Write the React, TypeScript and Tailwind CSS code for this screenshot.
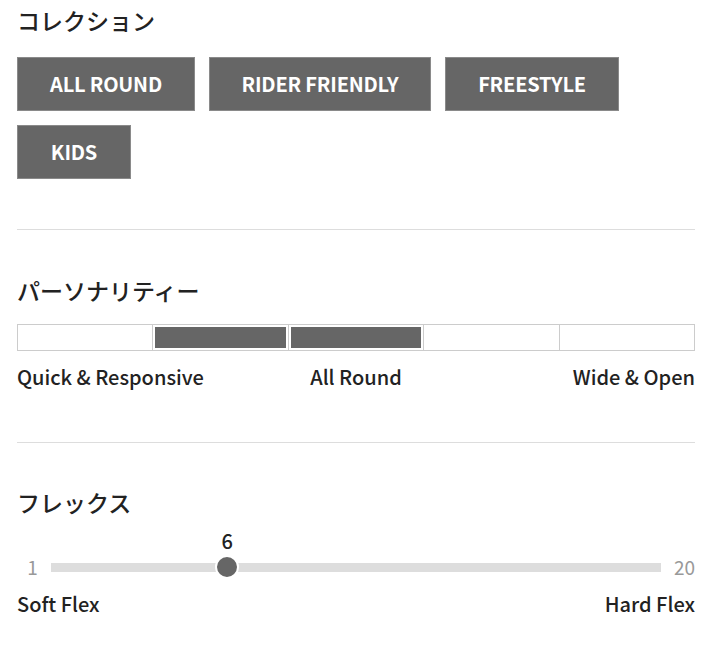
import React from "react";

const font = { fontFamily: '"Noto Sans CJK JP", "Noto Sans", sans-serif' };

function Tag({ label }: { label: string }) {
  return (
    <div className="h-[54px] bg-[#666666] border border-[#8a8a8a] flex items-center justify-center text-white font-bold text-[20px] leading-[28px] tracking-[-0.2px] pb-[1px]">
      {label}
    </div>
  );
}

export default function App() {
  const segs = [false, true, true, false, false];
  const min = 1;
  const max = 20;
  const val = 6;
  const pct = 28.9;
  return (
    <div className="w-[710px] h-[650px] bg-white pl-[17px] pr-[15px] pt-[4px] text-[#222]" style={font}>
      <h2 className="text-[23px] leading-[32px] font-medium text-[#222]">コレクション</h2>
      <div className="mt-[21px] flex flex-wrap gap-[14px]">
        <div className="w-[178px]"><Tag label="ALL ROUND" /></div>
        <div className="w-[222px]"><Tag label="RIDER FRIENDLY" /></div>
        <div className="w-[174px]"><Tag label="FREESTYLE" /></div>
        <div className="w-[114px]"><Tag label="KIDS" /></div>
      </div>
      <div className="mt-[50px] h-px bg-[#dddddd]" />

      <h2 className="mt-[44px] text-[23px] leading-[32px] font-medium text-[#222]">パーソナリティー</h2>
      <div className="mt-[18px] h-[27px] flex border border-[#cccccc]">
        {segs.map((f, i) => (
          <div key={i} className={`flex-1 p-[2px] ${i > 0 ? "border-l border-[#cccccc]" : ""}`}>
            {f && <div className="w-full h-full bg-[#666666]" />}
          </div>
        ))}
      </div>
      <div className="mt-[12px] flex justify-between text-[20px] leading-[28px] font-medium text-[#222]">
        <span className="w-[230px]">Quick &amp; Responsive</span>
        <span>All Round</span>
        <span className="w-[230px] text-right">Wide &amp; Open</span>
      </div>
      <div className="mt-[51px] h-px bg-[#dddddd]" />

      <h2 className="mt-[43px] text-[23px] leading-[32px] font-medium text-[#222]">フレックス</h2>
      <div className="mt-[7px] flex items-center">
        <span className="w-[34px] text-[19px] leading-[28px] text-[#999] text-center">&nbsp;</span>
        <div className="flex-1 relative h-[28px] mr-[34px]">
          <span
            className="absolute top-[2px] -translate-x-1/2 text-[20px] leading-[28px] font-medium text-[#222]"
            style={{ left: `${pct}%` }}
          >
            {val}
          </span>
        </div>
      </div>
      <div className="flex items-center h-[28px]">
        <span className="w-[34px] text-[19px] leading-[28px] text-[#999] text-center pr-[3px]">{min}</span>
        <div className="flex-1 relative h-[9px] bg-[#dddddd]">
          <div
            className="absolute top-1/2 -translate-x-1/2 -translate-y-1/2 w-[24px] h-[24px] rounded-full bg-[#666666] border-2 border-white"
            style={{ left: `${pct}%` }}
          />
        </div>
        <span className="w-[34px] text-[19px] leading-[28px] text-[#999] text-right">{max}</span>
      </div>
      <div className="mt-[9px] flex justify-between text-[20px] leading-[28px] font-medium text-[#222]">
        <span>Soft Flex</span>
        <span>Hard Flex</span>
      </div>
    </div>
  );
}
